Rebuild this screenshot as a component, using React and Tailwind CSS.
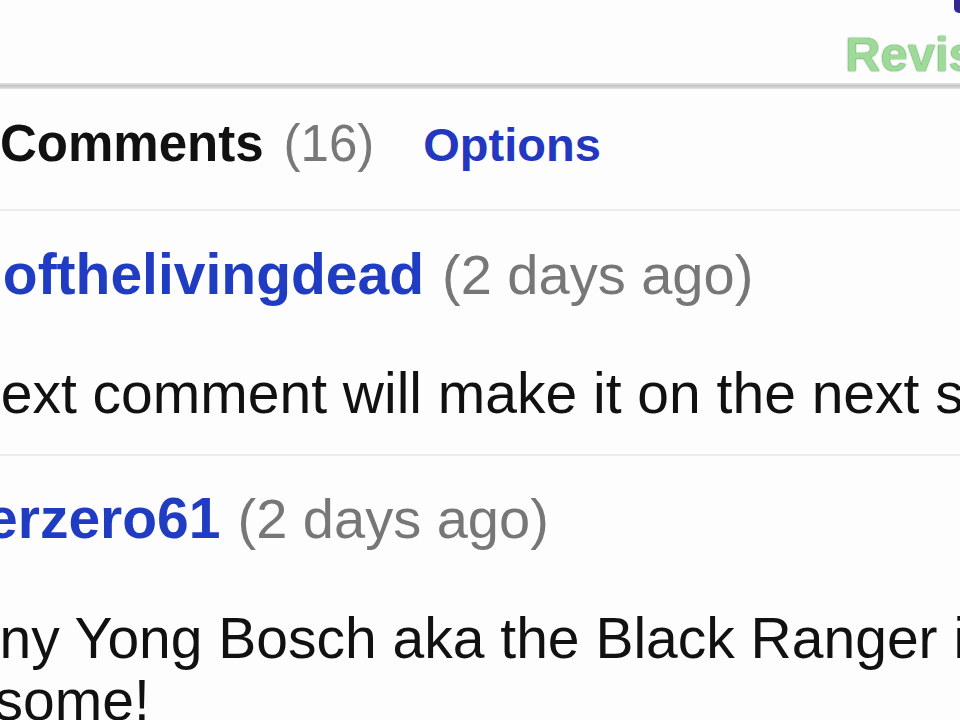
import React from 'react'

const FONT = { fontFamily: '"Liberation Sans", Arial, sans-serif' }

function Divider() {
  return <div className="h-[2px] bg-[#ebebeb]" />
}

function CommentRow({ nameText, nameShift, timeGap, children, last }) {
  return (
    <div className={last ? 'pt-[34px]' : 'pt-[35px] pb-[32px]'}>
      <div className="flex items-baseline whitespace-nowrap leading-none text-[56px]">
        <span className="font-bold text-[57px] text-[#1f3cc2]" style={{ marginLeft: nameShift }}>
          {nameText}
        </span>
        <span className="text-[#777777]" style={{ marginLeft: timeGap }}>
          (2 days ago)
        </span>
      </div>
      {children}
    </div>
  )
}

export default function App() {
  return (
    <div className="w-[960px] h-[720px] overflow-hidden bg-[#fdfdfd] relative" style={FONT}>
      {/* top strip */}
      <div className="h-[83px] pt-[30px] whitespace-nowrap">
        <span className="ml-[845px] text-[49px] leading-none font-bold text-[#9edb98] [text-shadow:0_0_1px_#4a8a4a,0_0_2px_#6fae6f]">
          Revis
        </span>
      </div>
      <div className="absolute top-0 right-0 w-[6px] h-[13px] rounded-bl-[5px] bg-[#35288f]" />
      <div className="h-[6px] bg-gradient-to-b from-[#e4e4e4] via-[#c3c3c3] to-[#e6e6e6]" />

      {/* comments header */}
      <div className="pt-[29px] pb-[40px] flex items-baseline whitespace-nowrap leading-none">
        <span className="text-[51px] font-bold text-[#111111]">Comments</span>
        <span className="ml-[20px] text-[51px] text-[#787878]">(16)</span>
        <span className="ml-[49px] text-[47px] font-bold text-[#2337c0]">Options</span>
      </div>
      <Divider />

      <CommentRow nameText="gofthelivingdead" nameShift={-32} timeGap={18}>
        <div className="mt-[62px] text-[57px] leading-none text-[#111111] whitespace-nowrap ml-[-31px]">
          next comment will make it on the next show
        </div>
      </CommentRow>
      <Divider />

      <CommentRow nameText="erzero61" nameShift={-14} timeGap={17} last>
        <div className="mt-[60px] text-[57px] leading-[62px] text-[#111111] whitespace-nowrap">
          <div className="ml-[-124px]">Johnny Yong Bosch aka the Black Ranger is</div>
          <div className="ml-[-110px]">awesome!</div>
        </div>
      </CommentRow>
    </div>
  )
}
